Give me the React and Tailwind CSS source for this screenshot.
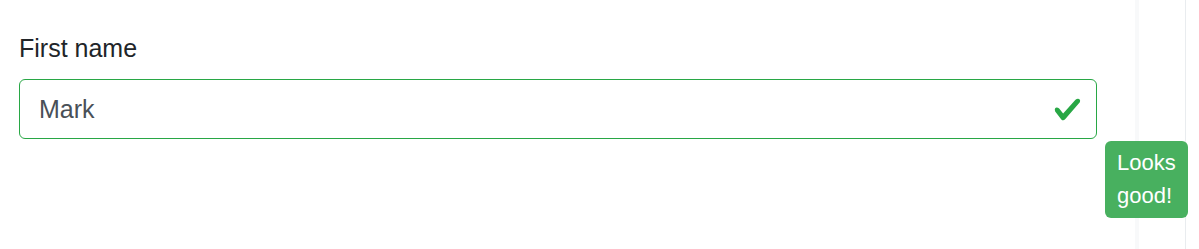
export default function App() {
  return (
    <div
      className="relative flex h-[249px] w-[1199px] bg-white overflow-hidden"
      style={{ fontFamily: '"Liberation Sans", Arial, sans-serif' }}
    >
      <div className="w-[1135px] pl-[19px] pr-[38px] pt-[30px]">
        <label className="block text-[25px] leading-[37px] text-[#212529]">First name</label>
        <div className="relative mt-[12px]">
          <input
            className="block h-[60px] w-[1078px] rounded-[6px] border border-[#28a745] bg-white pl-[19px] pr-[60px] text-[25px] text-[#495057] outline-none"
            style={{ fontFamily: '"Liberation Sans", Arial, sans-serif' }}
            defaultValue="Mark"
          />
          <svg
            className="absolute right-[15px] top-[15.5px] h-[29px] w-[29px]"
            viewBox="0 0 8 8"
          >
            <path
              fill="#28a745"
              d="M2.3 6.73L.6 4.53c-.4-1.04.46-1.4 1.1-.8l1.1 1.4 3.4-3.8c.6-.63 1.6-.27 1.2.7l-4 4.6c-.43.5-.8.4-1.1.1z"
            />
          </svg>
        </div>
      </div>
      <div className="w-[4px] bg-[#f8f9fa]" />
      <div className="w-[47px] border-r border-[#e9ecef]" />
      <div className="absolute left-[1105px] top-[141px] w-min rounded-[6px] bg-[#48b05f] px-[12px] py-[6px] text-[22px] leading-[32.5px] text-white">
        Looks good!
      </div>
    </div>
  );
}
